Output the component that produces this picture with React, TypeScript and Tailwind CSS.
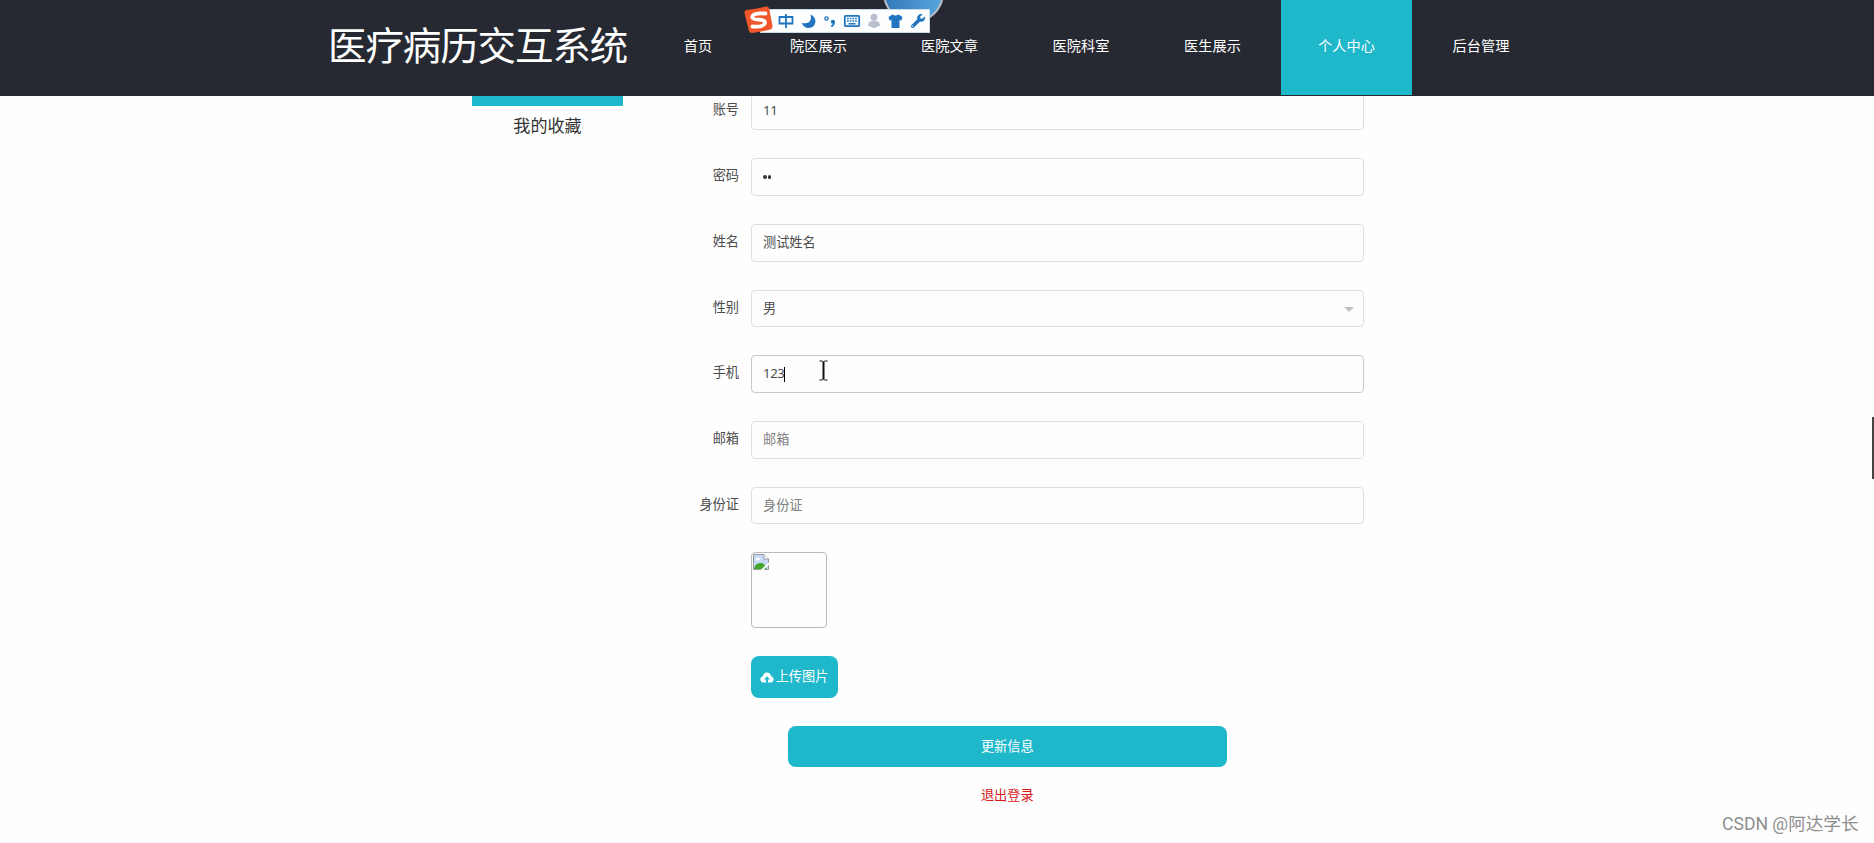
import { ReactNode } from 'react';
import { FaTshirt, FaWrench } from 'react-icons/fa';

interface NavItem {
  label: string;
  className: string;
}

const navItems: NavItem[] = [
  { label: '首页', className: 'w-[110px]' },
  { label: '院区展示', className: 'w-[131px]' },
  { label: '医院文章', className: 'w-[131px]' },
  { label: '医院科室', className: 'w-[132px]' },
  { label: '医生展示', className: 'w-[131px] mr-[3px]' },
  { label: '个人中心', className: 'w-[131px] h-[95px] bg-[#1eb8ca] mr-[3px]' },
  { label: '后台管理', className: 'w-[132px]' },
];

function Header() {
  return (
    <header className="relative z-10 h-24 bg-[#262931] text-white">
      <div className="flex h-24 pl-[328px]">
        <h1 className="w-[315px] pt-[18px] text-[38.5px] leading-[54px] tracking-[-1.1px] whitespace-nowrap">医疗病历交互系统</h1>
        <nav className="flex">
          {navItems.map((item) => (
            <a key={item.label} className={`flex justify-center pt-[34px] text-[14.2px] leading-6 whitespace-nowrap ${item.className}`}>
              {item.label}
            </a>
          ))}
        </nav>
      </div>
    </header>
  );
}

// Floating input-method toolbar, sits over the header.
function ImeBar() {
  return (
    <>
      <div className="absolute left-[883px] -top-[38px] z-20 size-[61px] rounded-full border-2 border-[#b9bec6] bg-linear-to-r from-[#3279b9] to-[#5aa5de]" />
      <div className="absolute left-[760px] top-[9px] z-20 h-6 w-[170px] border border-[#c9dcea] bg-[#fcfeff] text-[#2175c0]">
        <svg width="168" height="22" viewBox="761 10 168 22" fill="none" stroke="currentColor" strokeWidth="1.8">
          <path d="M779.500 17h13v6.500h-13zM786 14v14" />
          <path d="M810.500 14.500Q812 20 808.500 22.500Q805.500 24 801.500 22.800Q804 28 808.500 28Q815 27.500 815.500 21.500Q815.300 16.500 810.500 14.500z" fill="currentColor" stroke="none" />
          <circle cx="826.500" cy="18.500" r="1.700" strokeWidth="1.300" />
          <circle cx="832.800" cy="21.800" r="2" fill="currentColor" stroke="none" />
          <path d="M833.500 21q1.700 3-2.200 5.500" strokeWidth="1.800" />
          <rect x="844.800" y="15.800" width="14.400" height="10.400" rx="1" strokeWidth="1.800" />
          <path d="M847 18.500h10M847 21h10" strokeWidth="1.700" strokeDasharray="1.700 1" />
          <path d="M848.500 23.800h7" strokeWidth="1.500" />
          <g fill="#b9bfcc" stroke="none">
            <circle cx="874" cy="17.300" r="3.500" />
            <path d="M868 26q0-4.500 4-5h4q4 .5 4 5l-2.500.2q-.5 1.800-3.500 1.800t-3.500-1.800z" />
          </g>
        </svg>
        <svg className="absolute left-[127px] top-[4px]" width="15" height="15" viewBox="0 0 15 15" fill="currentColor">
          <path d="M4.500.500Q7.500 2.500 10.500.500L14.500 3L13.500 6.500L11.500 6V14H3.500V6L1.500 6.500L.5 3z" />
        </svg>
        <FaWrench className="absolute left-[150px] top-[4px] text-[14px]" />
      </div>
      <svg className="absolute left-[743px] top-[5px] z-20" width="31" height="29" viewBox="0 0 31 29">
        <path d="M3.500 5Q14 3.500 23 1.500q2.500-.3 3.200 2L29.500 21q.3 2.500-2 3.500q-9 2.500-18.500 3.500q-2.500 0-3.200-2.500L1.500 8q-.3-2.500 2-3z" fill="#f0562a" />
        <path d="M22.500 8.500Q9 7.500 9.300 12.500C10 16 22 13 22 17.500Q21 22.500 9.500 21.500" fill="none" stroke="#fff" strokeWidth="3.800" strokeLinecap="round" />
      </svg>
    </>
  );
}

interface FieldProps {
  label: string;
  children?: ReactNode;
  focused?: boolean;
}

function Field({ label, children, focused }: FieldProps) {
  return (
    <div className="mb-7 flex h-[37.700px] items-center">
      <label className="w-[59px] pb-0.5 text-right text-[13.200px] text-[#4c4c4c]">{label}</label>
      <div
        className={`relative ml-3 flex h-full w-[613px] items-center rounded-[4px] border px-[11px] text-[13.200px] text-[#4c4c4c] ${
          focused ? 'border-[#c9c9c9]' : 'border-[#dfdfe2]'
        }`}
      >
        {children}
      </div>
    </div>
  );
}

function BrokenImage() {
  return (
    <div className="size-[76px] overflow-hidden rounded-[4px] border border-[#bbb] p-px">
      <svg width="16" height="16" viewBox="0 0 16 16">
        <path d="M.5.500h10.500l4.500 4.500v10.500H.5z" fill="#c6d9f7" stroke="#999" />
        <ellipse cx="5" cy="5" rx="2.500" ry="1.500" fill="#fff" />
        <path d="M1 15q1-6 6.500-6q4.500 0 6.500 6z" fill="#43a52c" />
        <path d="M11 .5V5h4.500" fill="#fff" stroke="#999" />
        <path d="M8.500 16.500L16.500 9" stroke="#fefefe" strokeWidth="2" />
      </svg>
    </div>
  );
}

function UploadIcon() {
  return (
    <svg width="14" height="11" viewBox="0 0 14 11">
      <path d="M3.500 10.500Q.3 10.200.3 7.200Q.5 4.700 2.800 4.300Q3.500.5 7 .5T11.200 4.300Q13.600 4.800 13.700 7.300Q13.600 10.300 10.500 10.500H8V7.500h2L7 4.300L4 7.500h2v3z" fill="currentColor" />
    </svg>
  );
}

export default function App() {
  return (
    <div className="relative h-[843px] w-[1874px] overflow-hidden bg-[#fefefe] font-['Noto_Sans','Noto_Sans_CJK_SC',sans-serif]">
      <Header />
      <ImeBar />

      <main className="flex pl-[472px]">
        <aside className="w-[151px]">
          <div className="h-2.5 bg-[#1eb8ca]" />
          <div className="pt-[8px] text-center text-[17.100px] leading-6 text-[#333]">我的收藏</div>
        </aside>

        <section className="-mt-[3.500px] ml-[57px] w-[700px]">
          <Field label="账号">
            <span className="tracking-[-0.3px]">11</span>
          </Field>
          <Field label="密码">
            <span className="flex gap-[1px]">
              <i className="size-[3.500px] rounded-full bg-[#333]" />
              <i className="size-[3.500px] rounded-full bg-[#333]" />
            </span>
          </Field>
          <Field label="姓名">测试姓名</Field>
          <Field label="性别">
            男
            <span className="absolute right-[9px] top-[16px] border-x-[5.500px] border-t-[5px] border-x-transparent border-t-[#c2c2c2]" />
          </Field>
          <Field label="手机" focused>
            <span className="tracking-[-0.4px]">123</span>
            <span className="h-[15px] w-px bg-black" />
            <svg className="absolute left-[67px] top-[4px]" width="9" height="21" viewBox="0 0 9 21" fill="none" stroke="#111">
              <path d="M.5 1H3.500L4.500 2L5.500 1H8.500M.5 20H3.500L4.500 19L5.500 20H8.500" />
              <path d="M4.500 2V19" strokeWidth="2" />
            </svg>
          </Field>
          <Field label="邮箱">
            <span className="text-[#808080]">邮箱</span>
          </Field>
          <Field label="身份证">
            <span className="text-[#808080]">身份证</span>
          </Field>

          <div className="ml-[71px]">
            <BrokenImage />
            <button className="mt-7 flex h-[42px] w-[87px] items-center justify-center gap-[2px] rounded-lg bg-[#1eb8ca] pr-px text-[13.200px] whitespace-nowrap text-white">
              <UploadIcon />
              上传图片
            </button>
          </div>
          <div className="ml-[107.500px] flex w-[439.500px] flex-col items-center">
            <button className="mt-7 h-[41px] w-full rounded-lg bg-[#1eb8ca] text-[13.200px] text-white">更新信息</button>
            <a className="mt-[18px] text-[13.200px] leading-5 text-[#d8161b]">退出登录</a>
          </div>
        </section>
      </main>

      <div className="absolute right-0 top-[417px] h-[62px] w-0.5 bg-[#444]" />
      <div className="absolute left-[1722px] top-[812px] font-['Roboto','Noto_Sans_CJK_SC',sans-serif] text-[17.600px] leading-6 whitespace-nowrap text-[#8e8e8e]">
        CSDN @阿达学长
      </div>
    </div>
  );
}
